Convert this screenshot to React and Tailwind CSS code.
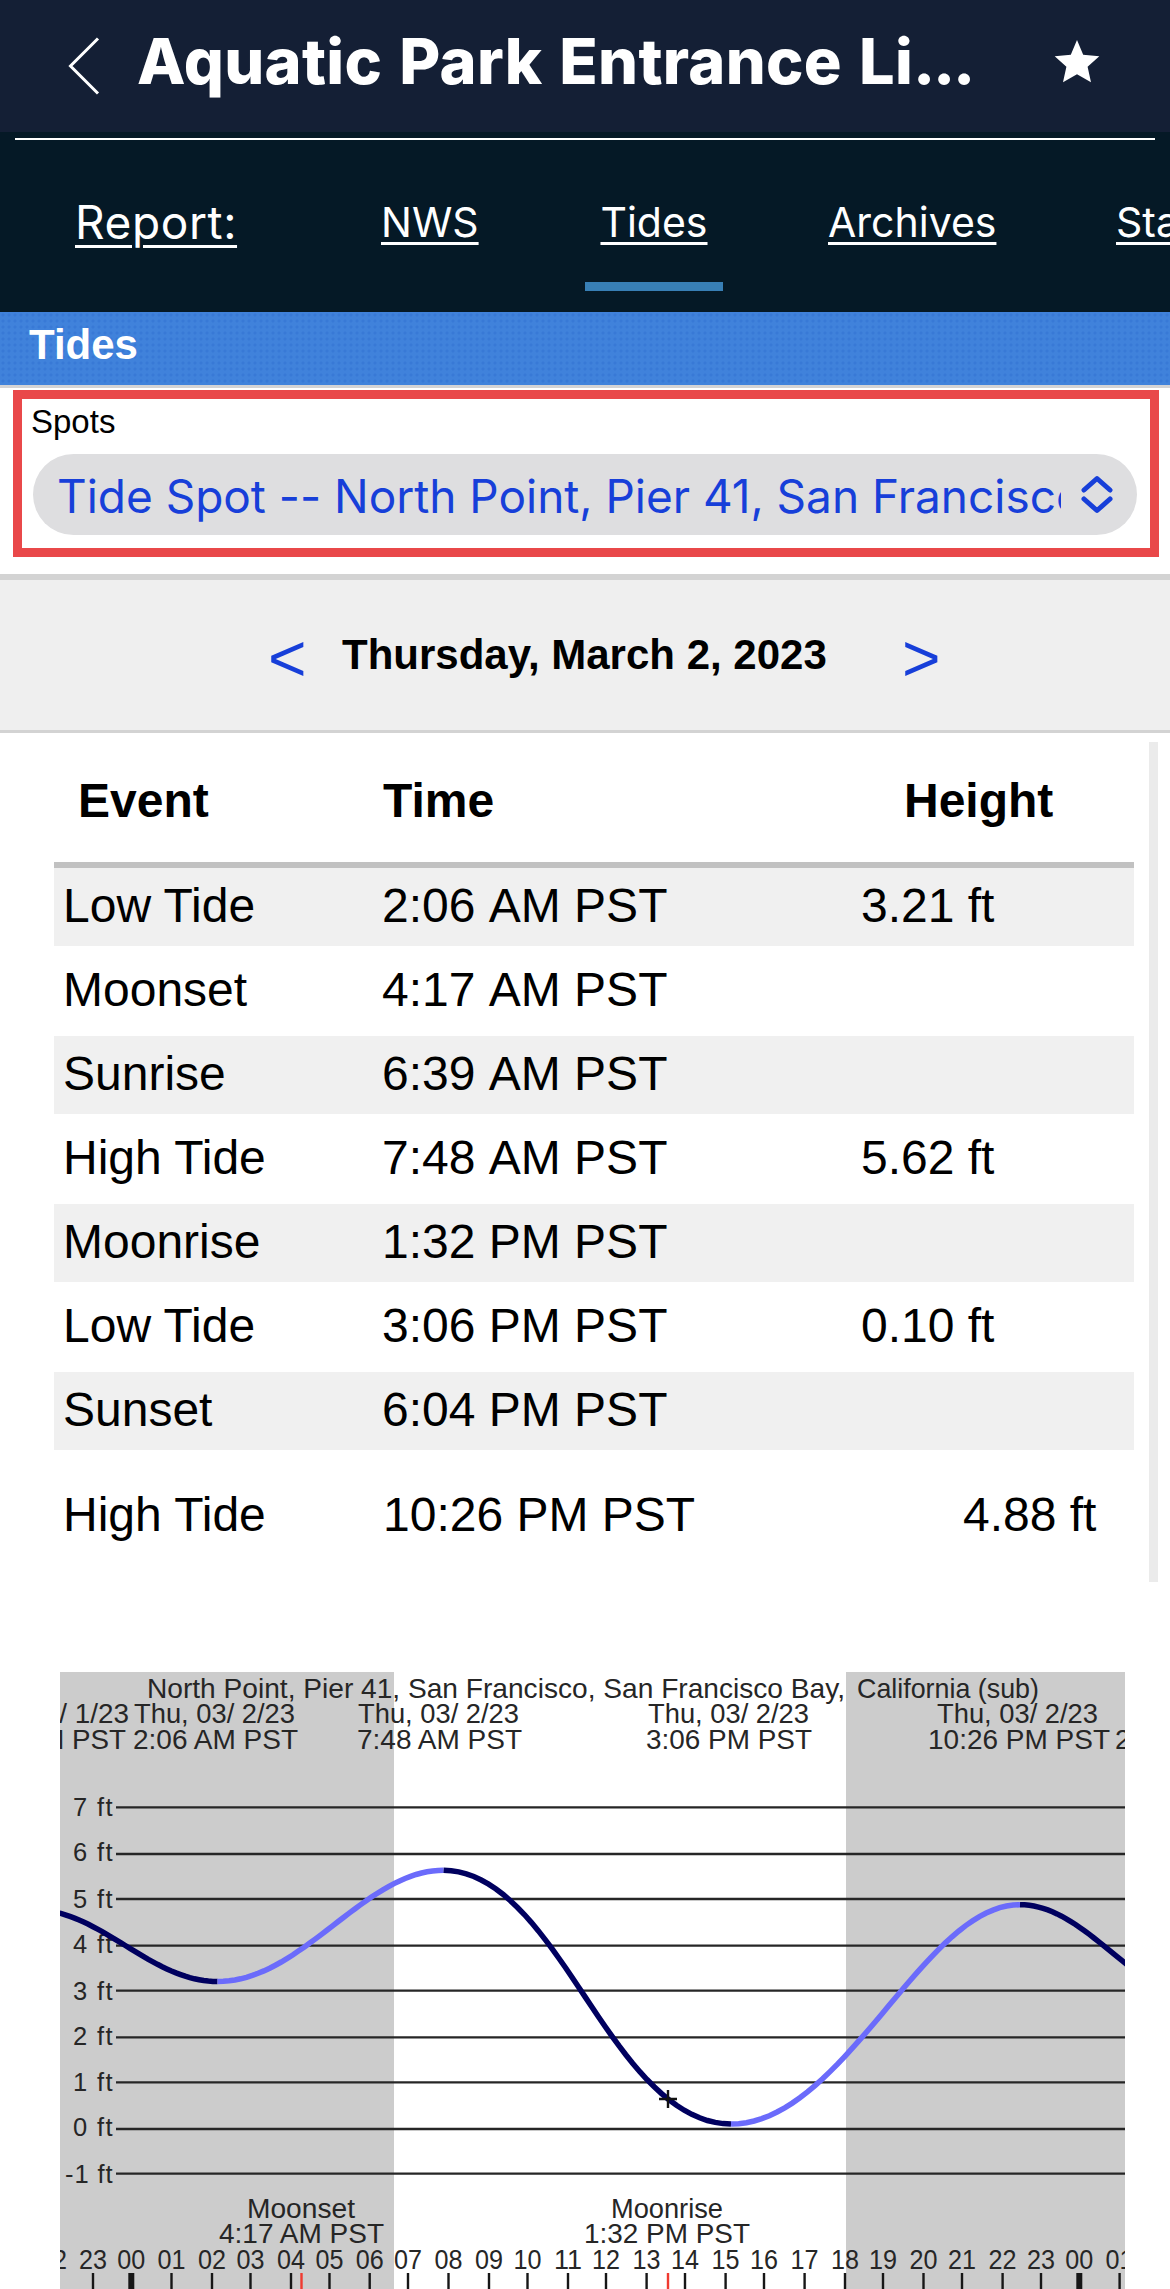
const events = [
  { event: "Low Tide", time: "2:06 AM PST", height: "3.21 ft" },
  { event: "Moonset", time: "4:17 AM PST" },
  { event: "Sunrise", time: "6:39 AM PST" },
  { event: "High Tide", time: "7:48 AM PST", height: "5.62 ft" },
  { event: "Moonrise", time: "1:32 PM PST" },
  { event: "Low Tide", time: "3:06 PM PST", height: "0.10 ft" },
  { event: "Sunset", time: "6:04 PM PST" },
];

const levels = [
  { ft: "7 ft", y: 135.3, base: 144 },
  { ft: "6 ft", y: 182, base: 189.3 },
  { ft: "5 ft", y: 227, base: 235.5 },
  { ft: "4 ft", y: 273.7, base: 280.7 },
  { ft: "3 ft", y: 318.7, base: 328 },
  { ft: "2 ft", y: 365.3, base: 372.5 },
  { ft: "1 ft", y: 410.3, base: 419.3 },
  { ft: "0 ft", y: 457, base: 464 },
  { ft: "-1 ft", y: 501.7, base: 510.7 },
];

const hours = [
  [-7, "22"], [33, "23"], [71.3, "00"], [111.5, "01"], [152, "02"], [190.5, "03"],
  [231, "04"], [269.5, "05"], [309.7, "06"], [348, "07"], [388.5, "08"], [429, "09"],
  [467.5, "10"], [508, "11"], [546, "12"], [586.6, "13"], [625, "14"], [665.6, "15"],
  [704, "16"], [744.6, "17"], [785, "18"], [823, "19"], [863.5, "20"], [902, "21"],
  [942.6, "22"], [981, "23"], [1019.3, "00"], [1059.6, "01"],
];

// Runs between high and low water; skew and lean bend the half cosine sideways
const runs = [
  { from: [-27, 237.5], to: [157.5, 309.5], skew: 0, lean: 0 },
  { from: [157.5, 309.5], to: [383.6, 198.3], skew: 2, lean: 0 },
  { from: [383.6, 198.3], to: [671, 452], skew: -2, lean: 3.5 },
  { from: [671, 452], to: [960, 232.7], skew: 6, lean: 0 },
  { from: [960, 232.7], to: [1145, 329], skew: 0, lean: 0 },
];

const labels = [
  { x: 87, y: 25.6, w: 698, text: "North Point, Pier 41, San Francisco, San Francisco Bay," },
  { x: 797, y: 25.6, w: 182, text: "California (sub)" },
  { x: 74, y: 51, w: 161, text: "Thu, 03/ 2/23" },
  { x: 73, y: 76.6, w: 165, text: "2:06 AM PST" },
  { x: 298, y: 51, w: 161, text: "Thu, 03/ 2/23" },
  { x: 297, y: 76.6, w: 165, text: "7:48 AM PST" },
  { x: 588, y: 51, w: 161, text: "Thu, 03/ 2/23" },
  { x: 586, y: 76.6, w: 166, text: "3:06 PM PST" },
  { x: 877, y: 51, w: 161, text: "Thu, 03/ 2/23" },
  { x: 868, y: 76.6, w: 182, text: "10:26 PM PST" },
  { x: 1055, y: 76.6, w: 164, text: "2:58 AM PST" },
  { x: -104, y: 51, w: 173, text: "Wed, 03/ 1/23" },
  { x: -99, y: 76.6, w: 165, text: "9:18 PM PST" },
  { x: 187, y: 545.6, w: 108, text: "Moonset" },
  { x: 159, y: 571.3, w: 165, text: "4:17 AM PST" },
  { x: 551, y: 545.6, w: 112, text: "Moonrise" },
  { x: 524, y: 571.3, w: 166, text: "1:32 PM PST" },
];

function curvePoints({ from, to, skew, lean }) {
  const points = [];
  for (let i = 0; i <= 40; i++) {
    const t = i / 40;
    const bend = skew * Math.sin(Math.PI * t) + lean * Math.sin(2 * Math.PI * t);
    const x = from[0] + (to[0] - from[0]) * t + bend;
    const y = (from[1] + to[1]) / 2 + ((from[1] - to[1]) / 2) * Math.cos(Math.PI * t);
    points.push(`${x.toFixed(1)},${y.toFixed(1)}`);
  }
  return points.join(" ");
}

function TideChart() {
  return (
    <svg
      width="1065"
      height="617"
      viewBox="0 0 1065 617"
      className="block ml-[60px] overflow-hidden font-['Liberation_Sans',sans-serif] text-[27.5px]"
      fill="#262626"
    >
      {/* Night and day */}
      <rect width="1065" height="617" fill="#fff" />
      <rect width="334" height="617" fill="#ccc" />
      <rect x="786" width="279" height="617" fill="#ccc" />

      {labels.map((l, i) => (
        <text key={i} x={l.x} y={l.y} textLength={l.w} lengthAdjust="spacingAndGlyphs">
          {l.text}
        </text>
      ))}

      {levels.map((l) => (
        <g key={l.ft}>
          <line x1="56" x2="1065" y1={l.y} y2={l.y} stroke="#262626" strokeWidth="2.3" />
          <text x={l.ft === "-1 ft" ? 5 : 13} y={l.base} textLength={l.ft === "-1 ft" ? 47.5 : 39.5} fontSize="25.5">
            {l.ft}
          </text>
        </g>
      ))}

      {/* Tide curve */}
      {runs.map((run, i) => (
        <polyline
          key={i}
          points={curvePoints(run)}
          fill="none"
          stroke={i % 2 ? "#6b6bfb" : "#00005f"}
          strokeWidth="5.5"
        />
      ))}
      <path d="M599 427H617M608 418V436" stroke="#111" strokeWidth="2.4" />

      {/* Hours */}
      {hours.map(([x, hour], i) => (
        <g key={i}>
          <text x={x - 14} y="596.6" textLength="28" lengthAdjust="spacingAndGlyphs">
            {hour}
          </text>
          <line x1={x} x2={x} y1="601" y2="617" stroke="#161616" strokeWidth={hour === "00" ? 6 : 2.4} />
        </g>
      ))}
      <path d="M241.5 601V617M608 601V617" stroke="#f03a30" strokeWidth="2.4" />
    </svg>
  );
}

export default function App() {
  return (
    <div className="w-[1170px] h-[2289px] overflow-hidden bg-white text-black font-['Liberation_Sans',Arial,sans-serif]">
      {/* Title bar */}
      <header className="flex items-start h-[132px] bg-[#141f35] text-white">
        <svg width="32" height="60" viewBox="0 0 32 60" className="ml-[68px] mt-9" fill="none" stroke="currentColor" strokeWidth="3">
          <path d="M30 2.5L2.5 30L30 57.5" />
        </svg>
        <h1 className="ml-[37px] mt-[21px] w-[860px] whitespace-nowrap font-['Inter',sans-serif] font-extrabold text-[63px] leading-[80px] tracking-[0.3px] [word-spacing:3px]">
          Aquatic Park Entrance Li<span className="-tracking-[2.2px]">...</span>
        </h1>
        <svg width="46" height="44" viewBox="0 0 46 44" className="ml-[57px] mt-[39px]" fill="currentColor">
          <path d="M23 1L29.2 15.8L45.3 17.2L33.6 27.7L37 43.2L23 35.3L9 43.2L12.4 27.7L.7 17.2L16.8 15.8Z" />
        </svg>
      </header>

      {/* Report tabs */}
      <nav className="h-[180px] overflow-hidden bg-[#051926] pt-1.5 text-white font-['Inter',sans-serif]">
        <div className="mx-[15px] h-0.5 bg-white" />
        <div className="flex h-[172px] w-[1400px] pl-[75px] text-[41px] leading-[50px]">
          <span className="mt-[54px] w-[162px] text-[46px] leading-[56px] tracking-[0.6px] underline decoration-[3px] underline-offset-[6px] whitespace-nowrap">
            Report:
          </span>
          <a className="ml-36 mt-[57px] w-[99px] underline decoration-[3px] underline-offset-[5px]">NWS</a>
          <div className="ml-[105px] flex w-[138px] flex-col items-center">
            <a className="mt-[57px] underline decoration-[3px] underline-offset-[5px]">Tides</a>
            <div className="mt-[35px] h-[9px] w-full bg-[#387fb5]" />
          </div>
          <a className="ml-[105px] mt-[57px] w-[168px] underline decoration-[3px] underline-offset-[5px]">Archives</a>
          <a className="ml-[120px] mt-[57px] underline decoration-[3px] underline-offset-[5px]">Stats</a>
        </div>
      </nav>

      <h2 className="h-[76px] border-b-[3px] border-[#d3d3d5] bg-[#4082db] bg-[radial-gradient(circle,#3879d6_1.3px,transparent_1.8px)] bg-size-[6px_6px] pl-[29px] pt-[9px] text-[42px] leading-[48px] font-bold text-white">
        Tides
      </h2>

      {/* Spot picker */}
      <section className="ml-[13px] mt-0.5 h-[167px] w-[1146px] border-[9px] border-[#e9484a] pl-[9px]">
        <div className="mt-1 h-[51px] text-[33px] leading-[38px]">Spots</div>
        <button className="ml-0.5 flex h-[81px] w-[1104px] items-center rounded-full bg-[#dedee0] pl-6 text-left text-[#173fd9]">
          <span className="w-[1004px] overflow-hidden whitespace-nowrap pt-0.5 font-['Inter',sans-serif] text-[46px] leading-[56px] tracking-[-0.02px]">
            Tide Spot -- North Point, Pier 41, San Francisco
          </span>
          <svg width="32" height="42" viewBox="0 0 32 42" className="ml-5" fill="none" stroke="currentColor" strokeWidth="5" strokeLinecap="round" strokeLinejoin="round">
            <path d="M3 16L16 4.5L29 16M3 25L16 36.5L29 25" />
          </svg>
        </button>
      </section>

      {/* Day picker */}
      <section className="mt-[17px] flex h-[159px] border-t-[6px] border-b-[3px] border-[#d3d3d3] bg-[#efefef]">
        <span className="ml-[268px] mt-10 w-[74px] text-[66px] leading-[76px] text-[#173fd9]">&lt;</span>
        <span className="mt-[51px] w-[560px] whitespace-nowrap text-[42px] leading-[48px] font-bold">
          Thursday, March 2, 2023
        </span>
        <span className="mt-10 text-[66px] leading-[76px] text-[#173fd9]">&gt;</span>
      </section>

      <section className="mt-[9px] ml-[54px] h-[840px] w-[1104px] border-r-[9px] border-[#ebebeb] pr-[15px] text-[48px] whitespace-nowrap">
        <div className="flex h-[126px] border-b-[6px] border-[#c1c1c1] pt-[31px] leading-[56px] font-bold">
          <span className="w-[329px] pl-6">Event</span>
          <span className="w-[521px]">Time</span>
          <span>Height</span>
        </div>
        {events.map((row, i) => (
          <div
            key={i}
            className={`flex pl-[9px] leading-[56px] ${i % 2 ? "h-[90px] pt-4" : "h-[78px] bg-[#f0f0f0] pt-2.5"}`}
          >
            <span className="w-[319px]">{row.event}</span>
            <span className="w-[479px] [font-kerning:none]">{row.time}</span>
            <span>{row.height}</span>
          </div>
        ))}
        <div className="flex pl-[9px] pt-[37px] leading-[56px]">
          <span className="w-80">High Tide</span>
          <span className="w-[580px]">10:26 PM PST</span>
          <span>4.88 ft</span>
        </div>
      </section>

      <div className="mt-[90px]">
        <TideChart />
      </div>
    </div>
  );
}
